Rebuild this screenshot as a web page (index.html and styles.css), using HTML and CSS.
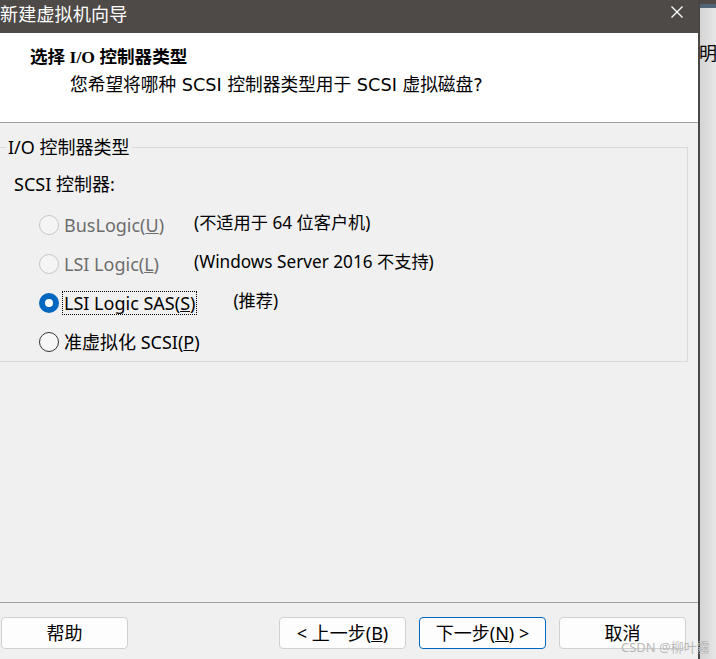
FILE: index.html
```html
<!DOCTYPE html>
<html lang="zh-CN">
<head>
<meta charset="utf-8">
<title>新建虚拟机向导</title>
<link rel="stylesheet" href="styles.css">
</head>
<body>
<div class="screen">
  <div class="window">
    <div class="titlebar">
      <span class="title">新建虚拟机向导</span>
      <svg class="close" width="12" height="12" viewBox="0 0 12 12"><path d="M0.5 0.5 L11.5 11.5 M11.5 0.5 L0.5 11.5" stroke="#fff" stroke-width="1.3" fill="none"/></svg>
    </div>
    <div class="header">
      <div class="h-title">选择 I/O 控制器类型</div>
      <div class="h-sub">您希望将哪种 SCSI 控制器类型用于 SCSI 虚拟磁盘?</div>
    </div>
    <div class="body">
      <fieldset class="group">
        <legend>I/O 控制器类型</legend>
        <div class="caption">SCSI 控制器:</div>
        <div class="options">
          <div class="opt disabled">
            <span class="radio"></span>
            <span class="lbl">BusLogic(<u>U</u>)</span>
            <span class="note">(不适用于 64 位客户机)</span>
          </div>
          <div class="opt disabled">
            <span class="radio"></span>
            <span class="lbl">LSI Logic(<u>L</u>)</span>
            <span class="note">(Windows Server 2016 不支持)</span>
          </div>
          <div class="opt">
            <span class="radio checked"></span>
            <span class="lbl focus">LSI Logic SAS(<u>S</u>)</span>
            <span class="note rec">(推荐)</span>
          </div>
          <div class="opt">
            <span class="radio"></span>
            <span class="lbl">准虚拟化 SCSI(<u>P</u>)</span>
          </div>
        </div>
      </fieldset>
    </div>
    <div class="footer">
      <button class="btn">帮助</button>
      <div class="spacer"></div>
      <button class="btn">&lt; 上一步(<u>B</u>)</button>
      <button class="btn primary">下一步(<u>N</u>) &gt;</button>
      <button class="btn">取消</button>
    </div>
  </div>
  <div class="edge"></div>
  <div class="beside">
    <div class="beside-top"></div>
    <div class="beside-text">明</div>
  </div>
  <div class="watermark">CSDN @柳叶霧</div>
</div>
</body>
</html>
```

FILE: styles.css
```css
* { box-sizing: border-box; }
html, body { margin: 0; padding: 0; }
body {
  width: 716px;
  height: 659px;
  overflow: hidden;
  font-family: "Noto Sans", "Noto Sans CJK SC", sans-serif;
  font-size: 18px;
  color: #000;
  background: #dcdcdc;
}
.screen {
  position: relative;
  display: flex;
  width: 716px;
  height: 659px;
}
.window {
  width: 698px;
  height: 659px;
  display: flex;
  flex-direction: column;
  background: #f0f0f0;
}
.titlebar {
  height: 33px;
  flex: none;
  background: #4e4a47;
  color: #fff;
  display: flex;
  align-items: flex-start;
  justify-content: space-between;
  padding-right: 15px;
}
.title {
  font-family: "Noto Sans CJK SC", sans-serif;
  font-size: 18px;
  line-height: 26px;
  letter-spacing: 0.2px;
}
.close { margin-top: 6px; }
.header {
  height: 90px;
  flex: none;
  background: #fff;
  border-bottom: 1px solid #a0a0a0;
  padding: 12px 0 0 30px;
}
.h-title {
  font-family: "Liberation Serif", "Noto Sans CJK SC", serif;
  font-weight: bold;
  font-size: 17.6px;
  line-height: 24px;
}
.h-sub {
  margin-top: 4px;
  padding-left: 40px;
  font-family: "DejaVu Sans", "Noto Sans CJK SC", sans-serif;
  font-size: 17.7px;
  line-height: 24px;
}
.body {
  flex: 1;
  padding-top: 12px;
}
.group {
  margin: 0;
  width: 688px;
  padding: 0 0 0 14px;
  border: 1px solid #d9d9d9;
  border-left: none;
  min-width: 0;
}
.group legend {
  margin-left: -8px;
  padding: 0 2px;
  line-height: 24px;
}
.caption {
  margin-top: 13px;
  line-height: 24px;
}
.options {
  margin-top: 9px;
  padding-left: 25px;
}
.opt {
  height: 39px;
  display: flex;
  align-items: center;
}
.radio {
  width: 20px;
  height: 20px;
  border-radius: 50%;
  border: 1px solid #333;
  background: #f7f7f7;
  flex: none;
  position: relative;
}
.disabled .radio {
  border-color: #c6c6c6;
  background: #f5f5f5;
}
.radio.checked {
  border: none;
  background: #0067c0;
}
.radio.checked::after {
  content: "";
  position: absolute;
  left: 6px;
  top: 6px;
  width: 8px;
  height: 8px;
  border-radius: 50%;
  background: #fff;
}
.lbl {
  margin-left: 3px;
  line-height: 22px;
  padding: 0 1px;
  border: 1px solid transparent;
}
.disabled .lbl { color: #6d6d6d; width: 132px; }
.lbl.focus { border: 1px dotted #000; }
.note {
  font-size: 17.2px;
  line-height: 22px;
  margin-top: -4px;
}
.note.rec { margin-left: 36px; margin-top: -4px; }
.footer {
  height: 57px;
  flex: none;
  border-top: 1px solid #a0a0a0;
  display: flex;
  align-items: flex-start;
  padding: 14px 12px 0 1px;
  gap: 13px;
}
.spacer { flex: 1; }
.btn {
  width: 127px;
  height: 32px;
  border: 1px solid #d0d0d0;
  border-radius: 4px;
  background: #fdfdfd;
  font-family: "Noto Sans", "Noto Sans CJK SC", sans-serif;
  font-size: 18px;
  color: #000;
  padding: 0;
  line-height: 28px;
}
.btn.primary { border-color: #0067c0; }
.edge {
  width: 2px;
  flex: none;
  background: #4a4644;
}
.beside {
  flex: 1;
  background: linear-gradient(to right, #d4d4d4, #e6e6e6);
  overflow: hidden;
}
.beside-top {
  height: 8px;
  border-top: 4px solid #4e4a47;
  background: #50647a;
}
.beside-text {
  margin-top: 32px;
  margin-left: -1px;
  font-family: "Noto Sans CJK SC", sans-serif;
  font-size: 18px;
  line-height: 24px;
  color: #000;
}
.watermark {
  position: absolute;
  left: 621px;
  top: 640px;
  font-family: "Noto Sans", "Noto Sans CJK SC", sans-serif;
  font-size: 13px;
  color: #b8b8b8;
  line-height: 14px;
}
```
